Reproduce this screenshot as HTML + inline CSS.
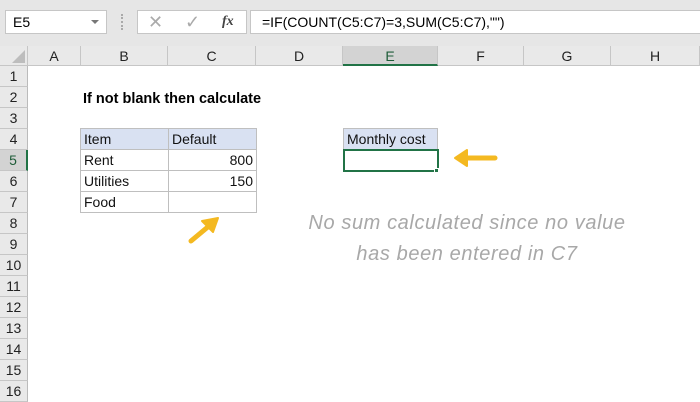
<!DOCTYPE html>
<html><head><style>
*{margin:0;padding:0;box-sizing:border-box}
body{width:700px;height:400px;overflow:hidden;background:#fff;font-family:"Liberation Sans",Calibri,sans-serif;position:relative}
.a{position:absolute}
.ch{position:absolute;top:46px;height:20px;border-right:1px solid #c6c6c6;background:#e9e9e9;font-size:14px;color:#222;text-align:center;line-height:20px;border-bottom:1px solid #c6c6c6}
.rh{position:absolute;left:0;width:28px;height:21px;border-bottom:1px solid #c6c6c6;background:#e9e9e9;font-size:14px;color:#222;text-align:center;line-height:21px;border-right:1px solid #bbb}
.c{position:absolute;height:22px;border:1px solid #bfbfbf;font-size:14px;line-height:21px;padding:0 3px;color:#111}
</style></head><body>
<div class="a" style="left:0;top:0;width:700px;height:46px;background:#e6e6e6"></div>
<div class="a" style="left:5px;top:10px;width:102px;height:24px;background:#fff;border:1px solid #c6c6c6;font-size:14px;line-height:22px;padding-left:7px">E5</div>
<div class="a" style="left:91px;top:20px;width:0;height:0;border-left:4px solid transparent;border-right:4px solid transparent;border-top:4px solid #777"></div>
<div class="a" style="left:121px;top:14px;width:2px;height:16px;border-left:2px dotted #aaa"></div>
<div class="a" style="left:137px;top:10px;width:110px;height:24px;background:#fff;border:1px solid #c6c6c6"></div>
<div class="a" style="left:148px;top:10px;font-size:18px;color:#aaa;line-height:24px">✕</div>
<div class="a" style="left:185px;top:10px;font-size:18px;color:#aaa;line-height:24px">✓</div>
<div class="a" style="left:222px;top:10px;font-size:14px;color:#444;line-height:24px;font-family:'Liberation Serif',serif;font-style:italic;font-weight:bold">fx</div>
<div class="a" style="left:250px;top:10px;width:450px;height:24px;background:#fff;border:1px solid #c6c6c6;border-right:none;font-size:14px;line-height:22px;padding-left:11px">=IF(COUNT(C5:C7)=3,SUM(C5:C7),"")</div>
<div class="ch" style="left:0;width:28px;background:#e9e9e9"></div>
<div class="a" style="left:12px;top:50px;width:0;height:0;border-left:13px solid transparent;border-bottom:13px solid #bdbdbd"></div>
<div class="ch" style="left:28px;width:53px">A</div>
<div class="ch" style="left:81px;width:87px">B</div>
<div class="ch" style="left:168px;width:88px">C</div>
<div class="ch" style="left:256px;width:87px">D</div>
<div class="ch" style="left:343px;width:95px;background:#d3d3d3;border-bottom:2px solid #217346;color:#1e5c38">E</div>
<div class="ch" style="left:438px;width:86px">F</div>
<div class="ch" style="left:524px;width:87px">G</div>
<div class="ch" style="left:611px;width:89px">H</div>
<div class="rh" style="top:66px">1</div>
<div class="rh" style="top:87px">2</div>
<div class="rh" style="top:108px">3</div>
<div class="rh" style="top:129px">4</div>
<div class="rh" style="top:150px;background:#d3d3d3;border-right:2px solid #217346;color:#1e5c38">5</div>
<div class="rh" style="top:171px">6</div>
<div class="rh" style="top:192px">7</div>
<div class="rh" style="top:213px">8</div>
<div class="rh" style="top:234px">9</div>
<div class="rh" style="top:255px">10</div>
<div class="rh" style="top:276px">11</div>
<div class="rh" style="top:297px">12</div>
<div class="rh" style="top:318px">13</div>
<div class="rh" style="top:339px">14</div>
<div class="rh" style="top:360px">15</div>
<div class="rh" style="top:381px">16</div>
<div class="a" style="left:83px;top:89px;font-size:14.5px;font-weight:bold;line-height:20px">If not blank then calculate</div>
<div class="c" style="left:80px;top:128px;width:89px;background:#d9e1f2">Item</div>
<div class="c" style="left:168px;top:128px;width:89px;background:#d9e1f2">Default</div>
<div class="c" style="left:80px;top:149px;width:89px">Rent</div>
<div class="c" style="left:168px;top:149px;width:89px;text-align:right">800</div>
<div class="c" style="left:80px;top:170px;width:89px">Utilities</div>
<div class="c" style="left:168px;top:170px;width:89px;text-align:right">150</div>
<div class="c" style="left:80px;top:191px;width:89px">Food</div>
<div class="c" style="left:168px;top:191px;width:89px"></div>
<div class="c" style="left:343px;top:128px;width:95px;background:#d9e1f2">Monthly cost</div>
<div class="a" style="left:343px;top:149px;width:96px;height:23px;border:2px solid #217346"></div>
<div class="a" style="left:434px;top:168px;width:5px;height:5px;background:#217346;border:1px solid #fff"></div>
<svg class="a" style="left:0;top:0" width="700" height="400">
<g stroke="#f4b921" fill="#f4b921" stroke-linecap="round" stroke-linejoin="round">
<line x1="191" y1="241" x2="209" y2="226" stroke-width="5"/>
<polygon points="218,218 202,221 213,232" stroke-width="2"/>
<line x1="467" y1="158" x2="495" y2="158" stroke-width="5"/>
<polygon points="455,158 467,150 467,166" stroke-width="2"/>
</g>
<text x="467" y="229" text-anchor="middle" font-family="Liberation Sans" font-style="italic" font-size="20" letter-spacing="0.6" fill="#a8a8a8">No sum calculated since no value</text>
<text x="467" y="260" text-anchor="middle" font-family="Liberation Sans" font-style="italic" font-size="20" letter-spacing="0.6" fill="#a8a8a8">has been entered in C7</text>
</svg>
</body></html>
